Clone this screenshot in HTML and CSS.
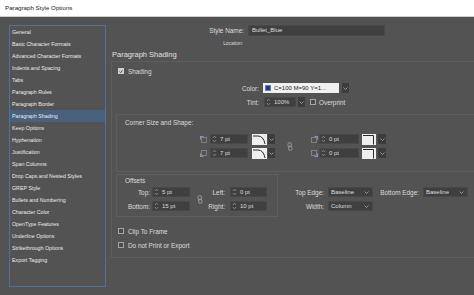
FILE: index.html
```html
<!DOCTYPE html>
<html lang="en">
<head>
  <meta charset="UTF-8">
  <title>Paragraph Style Options</title>
  <link rel="stylesheet" href="styles.css">
</head>
<body>
  <div class="titlebar">Paragraph Style Options</div>

  <div class="main">
    <ul class="nav">
      <li>General</li>
      <li>Basic Character Formats</li>
      <li>Advanced Character Formats</li>
      <li>Indents and Spacing</li>
      <li>Tabs</li>
      <li>Paragraph Rules</li>
      <li>Paragraph Border</li>
      <li class="active">Paragraph Shading</li>
      <li>Keep Options</li>
      <li>Hyphenation</li>
      <li>Justification</li>
      <li>Span Columns</li>
      <li>Drop Caps and Nested Styles</li>
      <li>GREP Style</li>
      <li>Bullets and Numbering</li>
      <li>Character Color</li>
      <li>OpenType Features</li>
      <li>Underline Options</li>
      <li>Strikethrough Options</li>
      <li>Export Tagging</li>
    </ul>

    <div class="content">
      <div class="row name-row">
        <span class="lbl">Style Name:</span>
        <div class="field name-field">Bullet_Blue</div>
      </div>
      <div class="row loc-row">
        <span class="lbl">Location:</span>
      </div>

      <h2 class="section">Paragraph Shading</h2>

      <div class="panel">
        <div class="check-row shading-row">
          <span class="cb on"><svg width="5" height="5" viewBox="0 0 5 5"><path d="M0.6 2.6 L2 4 L4.4 1" fill="none" stroke="#333" stroke-width="1"/></svg></span>
          <span>Shading</span>
        </div>

        <div class="row color-row">
          <span class="lbl wide">Color:</span>
          <div class="color-drop"><span class="swatch"></span>C=100 M=90 Y=1...</div>
          <span class="arrowbtn"><svg width="5" height="3" viewBox="0 0 5 3"><path d="M0.5 0.5 L2.5 2.5 L4.5 0.5" fill="none" stroke="#aaa" stroke-width="0.8"/></svg></span>
        </div>

        <div class="row tint-row">
          <span class="lbl wide">Tint:</span>
          <div class="field spin-field tint-field">
            <svg class="spin" width="5" height="8" viewBox="0 0 5 8"><path d="M0.8 3 L2.5 1.2 L4.2 3 M0.8 5 L2.5 6.8 L4.2 5" fill="none" stroke="#9a9a9a" stroke-width="0.8"/></svg>
            100%
          </div>
          <span class="arrowbtn tint-arrow"><svg width="5" height="3" viewBox="0 0 5 3"><path d="M0.5 0.5 L2.5 2.5 L4.5 0.5" fill="none" stroke="#aaa" stroke-width="0.8"/></svg></span>
          <span class="cb overprint-cb"></span>
          <span class="overprint">Overprint</span>
        </div>

        <div class="group corner-group">
          <div class="group-title">Corner Size and Shape:</div>
          <div class="corner-body">
            <div class="corner-col">
              <div class="corner-row">
                <svg class="corner-icon" width="7" height="7" viewBox="0 0 7 7"><rect x="1.5" y="1.5" width="5" height="5" fill="none" stroke="#8c8c8c" stroke-width="0.8"/><path d="M0.5 3.5 V0.5 H3.5" fill="none" stroke="#6f9ad0" stroke-width="1.2"/></svg>
                <div class="field spin-field corner-field">
                  <svg class="spin" width="5" height="8" viewBox="0 0 5 8"><path d="M0.8 3 L2.5 1.2 L4.2 3 M0.8 5 L2.5 6.8 L4.2 5" fill="none" stroke="#9a9a9a" stroke-width="0.8"/></svg>
                  7 pt
                </div>
                <svg class="preview" width="15" height="11" viewBox="0 0 15 11"><rect width="15" height="11" fill="#efefef"/><path d="M1 2 H6 Q11.5 2 13 10" fill="none" stroke="#2a2a2a" stroke-width="1"/></svg>
                <span class="arrowbtn small"><svg width="5" height="3" viewBox="0 0 5 3"><path d="M0.5 0.5 L2.5 2.5 L4.5 0.5" fill="none" stroke="#aaa" stroke-width="0.8"/></svg></span>
              </div>
              <div class="corner-row">
                <svg class="corner-icon" width="7" height="7" viewBox="0 0 7 7"><rect x="1.5" y="0.5" width="5" height="5" fill="none" stroke="#8c8c8c" stroke-width="0.8"/><path d="M0.5 3.5 V6.5 H3.5" fill="none" stroke="#6f9ad0" stroke-width="1.2"/></svg>
                <div class="field spin-field corner-field">
                  <svg class="spin" width="5" height="8" viewBox="0 0 5 8"><path d="M0.8 3 L2.5 1.2 L4.2 3 M0.8 5 L2.5 6.8 L4.2 5" fill="none" stroke="#9a9a9a" stroke-width="0.8"/></svg>
                  7 pt
                </div>
                <svg class="preview" width="15" height="11" viewBox="0 0 15 11"><rect width="15" height="11" fill="#efefef"/><path d="M1 2 H6 Q11.5 2 13 10" fill="none" stroke="#2a2a2a" stroke-width="1"/></svg>
                <span class="arrowbtn small"><svg width="5" height="3" viewBox="0 0 5 3"><path d="M0.5 0.5 L2.5 2.5 L4.5 0.5" fill="none" stroke="#aaa" stroke-width="0.8"/></svg></span>
              </div>
            </div>

            <svg class="chain corner-chain" width="6" height="9" viewBox="0 0 6 9"><rect x="1" y="0.6" width="3.4" height="4.4" rx="1.6" fill="none" stroke="#a0a0a0" stroke-width="0.9"/><rect x="1.6" y="4" width="3.4" height="4.4" rx="1.6" fill="none" stroke="#a0a0a0" stroke-width="0.9"/></svg>

            <div class="corner-col right-col">
              <div class="corner-row">
                <svg class="corner-icon" width="7" height="7" viewBox="0 0 7 7"><rect x="0.5" y="1.5" width="5" height="5" fill="none" stroke="#8c8c8c" stroke-width="0.8"/><path d="M3.5 0.5 H6.5 V3.5" fill="none" stroke="#6f9ad0" stroke-width="1.2"/></svg>
                <div class="field spin-field corner-field wide-field">
                  <svg class="spin" width="5" height="8" viewBox="0 0 5 8"><path d="M0.8 3 L2.5 1.2 L4.2 3 M0.8 5 L2.5 6.8 L4.2 5" fill="none" stroke="#9a9a9a" stroke-width="0.8"/></svg>
                  0 pt
                </div>
                <svg class="preview" width="14" height="11" viewBox="0 0 14 11"><rect width="14" height="11" fill="#efefef"/><path d="M1 1.5 H11.5 V10.5" fill="none" stroke="#2a2a2a" stroke-width="1"/></svg>
                <span class="arrowbtn small wide-arrow"><svg width="5" height="3" viewBox="0 0 5 3"><path d="M0.5 0.5 L2.5 2.5 L4.5 0.5" fill="none" stroke="#aaa" stroke-width="0.8"/></svg></span>
              </div>
              <div class="corner-row">
                <svg class="corner-icon" width="7" height="7" viewBox="0 0 7 7"><rect x="0.5" y="0.5" width="5" height="5" fill="none" stroke="#8c8c8c" stroke-width="0.8"/><path d="M3.5 6.5 H6.5 V3.5" fill="none" stroke="#6f9ad0" stroke-width="1.2"/></svg>
                <div class="field spin-field corner-field wide-field">
                  <svg class="spin" width="5" height="8" viewBox="0 0 5 8"><path d="M0.8 3 L2.5 1.2 L4.2 3 M0.8 5 L2.5 6.8 L4.2 5" fill="none" stroke="#9a9a9a" stroke-width="0.8"/></svg>
                  0 pt
                </div>
                <svg class="preview" width="14" height="11" viewBox="0 0 14 11"><rect width="14" height="11" fill="#efefef"/><path d="M1 1.5 H11.5 V10.5" fill="none" stroke="#2a2a2a" stroke-width="1"/></svg>
                <span class="arrowbtn small wide-arrow"><svg width="5" height="3" viewBox="0 0 5 3"><path d="M0.5 0.5 L2.5 2.5 L4.5 0.5" fill="none" stroke="#aaa" stroke-width="0.8"/></svg></span>
              </div>
            </div>
          </div>
        </div>

        <div class="offset-line">
          <div class="group offsets-group">
            <div class="group-title">Offsets</div>
            <div class="offsets-body">
              <div class="off-col">
                <div class="off-row">
                  <span class="lbl off-lbl">Top:</span>
                  <div class="field spin-field off-field">
                    <svg class="spin" width="5" height="8" viewBox="0 0 5 8"><path d="M0.8 3 L2.5 1.2 L4.2 3 M0.8 5 L2.5 6.8 L4.2 5" fill="none" stroke="#9a9a9a" stroke-width="0.8"/></svg>
                    5 pt
                  </div>
                </div>
                <div class="off-row">
                  <span class="lbl off-lbl">Bottom:</span>
                  <div class="field spin-field off-field">
                    <svg class="spin" width="5" height="8" viewBox="0 0 5 8"><path d="M0.8 3 L2.5 1.2 L4.2 3 M0.8 5 L2.5 6.8 L4.2 5" fill="none" stroke="#9a9a9a" stroke-width="0.8"/></svg>
                    15 pt
                  </div>
                </div>
              </div>

              <svg class="chain off-chain" width="6" height="9" viewBox="0 0 6 9"><rect x="1" y="0.6" width="3.4" height="4.4" rx="1.6" fill="none" stroke="#a0a0a0" stroke-width="0.9"/><rect x="1.6" y="4" width="3.4" height="4.4" rx="1.6" fill="none" stroke="#a0a0a0" stroke-width="0.9"/></svg>

              <div class="off-col">
                <div class="off-row">
                  <span class="lbl off-lbl2">Left:</span>
                  <div class="field spin-field off-field2">
                    <svg class="spin" width="5" height="8" viewBox="0 0 5 8"><path d="M0.8 3 L2.5 1.2 L4.2 3 M0.8 5 L2.5 6.8 L4.2 5" fill="none" stroke="#9a9a9a" stroke-width="0.8"/></svg>
                    0 pt
                  </div>
                </div>
                <div class="off-row">
                  <span class="lbl off-lbl2">Right:</span>
                  <div class="field spin-field off-field2">
                    <svg class="spin" width="5" height="8" viewBox="0 0 5 8"><path d="M0.8 3 L2.5 1.2 L4.2 3 M0.8 5 L2.5 6.8 L4.2 5" fill="none" stroke="#9a9a9a" stroke-width="0.8"/></svg>
                    10 pt
                  </div>
                </div>
              </div>
            </div>
          </div>

          <div class="edges">
            <div class="edge-row">
              <span class="lbl edge-lbl">Top Edge:</span>
              <div class="select">Baseline<svg width="5" height="3" viewBox="0 0 5 3"><path d="M0.5 0.5 L2.5 2.5 L4.5 0.5" fill="none" stroke="#aaa" stroke-width="0.8"/></svg></div>
              <span class="lbl edge-lbl2">Bottom Edge:</span>
              <div class="select">Baseline<svg width="5" height="3" viewBox="0 0 5 3"><path d="M0.5 0.5 L2.5 2.5 L4.5 0.5" fill="none" stroke="#aaa" stroke-width="0.8"/></svg></div>
            </div>
            <div class="edge-row">
              <span class="lbl edge-lbl">Width:</span>
              <div class="select">Column<svg width="5" height="3" viewBox="0 0 5 3"><path d="M0.5 0.5 L2.5 2.5 L4.5 0.5" fill="none" stroke="#aaa" stroke-width="0.8"/></svg></div>
            </div>
          </div>
        </div>

        <div class="check-row clip-row">
          <span class="cb"></span>
          <span>Clip To Frame</span>
        </div>
        <div class="check-row print-row">
          <span class="cb"></span>
          <span>Do not Print or Export</span>
        </div>
      </div>
    </div>
  </div>
</body>
</html>
```

FILE: styles.css
```css
* {
  box-sizing: border-box;
  margin: 0;
  padding: 0;
}

body {
  width: 474px;
  height: 295px;
  overflow: hidden;
  background: #535353;
  font-family: "Liberation Sans", Arial, sans-serif;
  color: #dcdcdc;
}

.titlebar {
  height: 17px;
  background: #fff;
  border-bottom: 1px solid #cfcfcf;
  color: #222;
  font-size: 6.2px;
  line-height: 16px;
  padding-left: 5px;
}

.main {
  display: flex;
  padding: 8px 0 0 9px;
}

/* left category list */
.nav {
  list-style: none;
  flex: none;
  width: 97px;
  height: 262px;
  border: 1px solid #4d72a0;
  font-size: 5.3px;
  color: #ececec;
}

.nav li {
  height: 12px;
  line-height: 12px;
  padding-left: 2px;
  white-space: nowrap;
}

.nav li.active {
  background: #47617f;
}

.content {
  flex: 1;
  min-width: 0;
  margin-left: 5px;
}

.row {
  display: flex;
  align-items: center;
}

.lbl {
  flex: none;
  text-align: right;
  font-size: 6.4px;
  white-space: nowrap;
}

.field {
  flex: none;
  background: #3f3f3f;
  border: 1px solid #484848;
  font-size: 6px;
  color: #dedede;
  white-space: nowrap;
}

.name-row {
  height: 11px;
}

.name-row .lbl {
  width: 133px;
  margin-right: 4px;
}

.name-field {
  width: 137px;
  height: 11px;
  line-height: 9px;
  padding-left: 3px;
}

.loc-row {
  height: 8px;
  margin-top: 3px;
}

.loc-row .lbl {
  width: 132px;
  font-size: 4.9px;
}

.section {
  height: 10px;
  line-height: 10px;
  margin-top: 3px;
  padding-left: 1px;
  font-size: 7.5px;
  font-weight: normal;
  color: #e2e2e2;
}

.panel {
  margin-top: 1px;
  height: 197px;
  border: 1px solid #5e5e5e;
  border-right: none;
  padding-left: 4px;
}

/* checkboxes */
.check-row {
  display: flex;
  align-items: center;
  gap: 4px;
  height: 8px;
  margin-left: 2px;
  font-size: 6.4px;
}

.cb {
  flex: none;
  display: flex;
  align-items: center;
  justify-content: center;
  width: 6px;
  height: 6px;
  border: 1px solid #a5a5a5;
  background: #4a4a4a;
}

.cb.on {
  background: #d0d0d0;
  border-color: #d0d0d0;
}

.shading-row {
  margin-top: 5px;
}

.clip-row {
  margin-top: 10px;
}

.print-row {
  margin-top: 6px;
}

/* color / tint */
.color-row {
  height: 10px;
  margin-top: 8px;
}

.lbl.wide {
  width: 143px;
  margin-right: 4px;
}

.color-drop {
  display: flex;
  align-items: center;
  gap: 3px;
  width: 76px;
  height: 10px;
  padding-left: 2px;
  background: #f1f1f1;
  color: #222;
  font-size: 6px;
  white-space: nowrap;
}

.swatch {
  width: 6px;
  height: 6px;
  background: #1d3b8e;
  border: 1px solid #7080a8;
}

.arrowbtn {
  flex: none;
  display: flex;
  align-items: center;
  justify-content: center;
  width: 7px;
  height: 10px;
  margin-left: 3px;
  background: #3c3c3c;
}

.tint-row {
  height: 10px;
  margin-top: 4px;
}

.spin-field {
  display: flex;
  align-items: center;
  gap: 3px;
  height: 10px;
  padding-left: 1px;
}

.tint-field {
  width: 32px;
  margin-left: 1px;
}

.tint-arrow {
  margin-left: 2px;
}

.overprint-cb {
  margin-left: 5px;
}

.overprint {
  margin-left: 3px;
  font-size: 6.4px;
}

/* grouped boxes */
.group {
  border: 1px solid #5e5e5e;
}

.group-title {
  height: 8px;
  line-height: 8px;
  padding-left: 8px;
  font-size: 6.4px;
}

.corner-group {
  height: 58px;
  margin-top: 7px;
  border-right: none;
}

.corner-group .group-title {
  margin-top: 4px;
}

.corner-body {
  display: flex;
  align-items: center;
  margin-top: 7px;
  padding-left: 83px;
}

.corner-col {
  display: flex;
  flex-direction: column;
  gap: 4px;
}

.corner-row {
  display: flex;
  align-items: center;
  height: 10px;
}

.corner-icon {
  flex: none;
  margin-right: 3px;
}

.corner-field {
  width: 38px;
}

.preview {
  flex: none;
  margin-left: 4px;
}

.arrowbtn.small {
  margin-left: 1px;
}

.corner-chain {
  flex: none;
  margin-left: 12px;
}

.right-col {
  margin-left: 18px;
}

.right-col .corner-icon {
  margin-right: 1px;
}

.wide-field {
  width: 40px;
}

.right-col .preview {
  margin-left: 3px;
}

.arrowbtn.wide-arrow {
  width: 8px;
  margin-left: 2px;
}

/* offsets and edges */
.offset-line {
  display: flex;
  margin-top: 2px;
}

.offsets-group {
  flex: none;
  width: 162px;
  height: 43px;
}

.offsets-group .group-title {
  margin-top: 2px;
}

.offsets-body {
  display: flex;
  align-items: center;
  margin-top: 2px;
}

.off-col {
  display: flex;
  flex-direction: column;
  gap: 4px;
}

.off-row {
  display: flex;
  align-items: center;
  height: 10px;
}

.off-lbl {
  width: 33px;
  margin-right: 2px;
}

.off-field {
  width: 38px;
}

.off-chain {
  flex: none;
  margin-left: 7px;
}

.off-lbl2 {
  width: 22px;
  margin-right: 5px;
}

.off-field2 {
  width: 37px;
}

.edges {
  display: flex;
  flex-direction: column;
  gap: 4px;
  margin-left: 4px;
  padding-top: 13px;
}

.edge-row {
  display: flex;
  align-items: center;
  height: 10px;
}

.edge-lbl {
  width: 42px;
  margin-right: 4px;
}

.edge-lbl2 {
  width: 41px;
  margin-left: 5px;
  margin-right: 4px;
}

.select {
  flex: none;
  display: flex;
  align-items: center;
  justify-content: space-between;
  width: 45px;
  height: 10px;
  padding: 0 3px 0 2px;
  background: #3f3f3f;
  border: 1px solid #484848;
  font-size: 6px;
  color: #dedede;
}
```
